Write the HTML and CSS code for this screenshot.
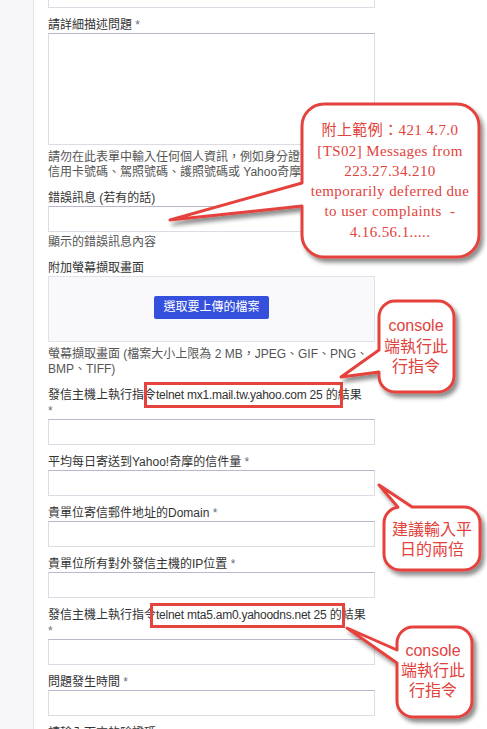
FILE: index.html
```html
<!DOCTYPE html>
<html lang="zh-Hant">
<head>
<meta charset="utf-8">
<title>表單</title>
<link rel="stylesheet" href="styles.css">
</head>
<body>
<div class="page">
  <aside class="sidebar"></aside>
  <main class="form">
    <div class="box stub"></div>

    <div class="label">請詳細描述問題 <span class="req">*</span></div>
    <div class="box textarea"></div>
    <div class="help">請勿在此表單中輸入任何個人資訊，例如身分證字號、<br>信用卡號碼、駕照號碼、護照號碼或 Yahoo奇摩密碼。</div>

    <div class="label">錯誤訊息 (若有的話)</div>
    <div class="box input"></div>
    <div class="help near">顯示的錯誤訊息內容</div>

    <div class="label">附加螢幕擷取畫面</div>
    <div class="upload"><span class="upload-btn">選取要上傳的檔案</span></div>
    <div class="help">螢幕擷取畫面 (檔案大小上限為 2 MB，JPEG、GIF、PNG、<br>BMP、TIFF)</div>

    <div class="label">發信主機上執行指令<span class="cmd">telnet mx1.mail.tw.yahoo.com 25</span> 的結果<br><span class="req">*</span></div>
    <div class="box input"></div>

    <div class="label">平均每日寄送到Yahoo!奇摩的信件量 <span class="req">*</span></div>
    <div class="box input"></div>

    <div class="label">貴單位寄信郵件地址的Domain <span class="req">*</span></div>
    <div class="box input"></div>

    <div class="label">貴單位所有對外發信主機的IP位置 <span class="req">*</span></div>
    <div class="box input"></div>

    <div class="label">發信主機上執行指令<span class="cmd">telnet mta5.am0.yahoodns.net 25</span> 的結果<br><span class="req">*</span></div>
    <div class="box input"></div>

    <div class="label">問題發生時間 <span class="req">*</span></div>
    <div class="box input"></div>

    <div class="label">請輸入下方的驗證碼</div>
  </main>

  <svg class="annot" width="487" height="729" viewBox="0 0 487 729" xmlns="http://www.w3.org/2000/svg">
    <defs>
      <filter id="sh" x="-20%" y="-20%" width="150%" height="150%">
        <feDropShadow dx="3" dy="4" stdDeviation="2" flood-color="#000" flood-opacity="0.45"/>
      </filter>
    </defs>

    <rect class="mark" x="145.5" y="383.5" width="196" height="23"/>
    <rect class="mark" x="151.5" y="604.5" width="192" height="22"/>

    <path class="bubble" filter="url(#sh)" d="M324 104 H457 A22 22 0 0 1 479 126 V235 A22 22 0 0 1 457 257 H324 A22 22 0 0 1 302 235 V206 L170 220 L302 183 V126 A22 22 0 0 1 324 104 Z"/>
    <text class="t-serif" x="390" y="135">附上範例：421 4.7.0</text>
    <text class="t-serif" x="390" y="156">[TS02] Messages from</text>
    <text class="t-serif" x="390" y="176">223.27.34.210</text>
    <text class="t-serif" x="390" y="196">temporarily deferred due</text>
    <text class="t-serif" x="390" y="216" xml:space="preserve">to user complaints  -</text>
    <text class="t-serif" x="390" y="237">4.16.56.1.....</text>

    <path class="bubble" filter="url(#sh)" d="M395 301 H438 A16 16 0 0 1 454 317 V376 A16 16 0 0 1 438 392 H395 A16 16 0 0 1 379 376 V372 L341 377 L379 350 V317 A16 16 0 0 1 395 301 Z"/>
    <text class="t-sans" x="416" y="331">console</text>
    <text class="t-sans" x="416" y="352">端執行此</text>
    <text class="t-sans" x="416" y="372">行指令</text>

    <path class="bubble" filter="url(#sh)" d="M412 507 H464 A16 16 0 0 1 480 523 V554 A16 16 0 0 1 464 570 H400 A16 16 0 0 1 384 554 V523 A16 16 0 0 1 398 507.2 L379 485 L412 507 Z"/>
    <text class="t-sans" x="432" y="535">建議輸入平</text>
    <text class="t-sans" x="432" y="555">日的兩倍</text>

    <path class="bubble" filter="url(#sh)" d="M413 627 H456 A16 16 0 0 1 472 643 V701 A16 16 0 0 1 456 717 H413 A16 16 0 0 1 397 701 V663 L347 628 L397 650 V643 A16 16 0 0 1 413 627 Z"/>
    <text class="t-sans" x="433" y="656">console</text>
    <text class="t-sans" x="433" y="676">端執行此</text>
    <text class="t-sans" x="433" y="696">行指令</text>
  </svg>
</div>
</body>
</html>
```

FILE: styles.css
```css
html, body {
  margin: 0;
  padding: 0;
  background: #fff;
}

body {
  font-family: "Liberation Sans", "Noto Sans CJK TC", sans-serif;
  font-size: 12px;
  color: #333;
}

.page {
  position: relative;
  display: flex;
  width: 487px;
  height: 729px;
  overflow: hidden;
}

.sidebar {
  flex: none;
  width: 33px;
  background: #f7f7f9;
  border-right: 1px solid #e3e3ea;
}

.form {
  flex: none;
  width: 327px;
  padding-left: 14px;
}

.box {
  box-sizing: border-box;
  width: 327px;
  background: #fff;
  border: 1px solid #dcdce4;
  border-top-color: #b9b6cd;
}

.stub {
  height: 8px;
  border-top: none;
}

.textarea {
  height: 112px;
}

.input {
  height: 26px;
}

.label {
  margin-top: 9px;
  line-height: 16px;
  white-space: nowrap;
  color: #333;
}

.help + .label {
  margin-top: 10px;
}

.cmd {
  letter-spacing: -0.25px;
}

.req {
  color: #6d6d7e;
}

.help {
  margin: 5px 0 0;
  line-height: 15px;
  color: #555;
  white-space: nowrap;
}

.help.near {
  margin-top: 3px;
}

.upload {
  box-sizing: border-box;
  width: 327px;
  height: 66px;
  border: 1px solid #e1e1e9;
  background: #f9f9fc;
  display: flex;
  align-items: center;
  justify-content: center;
}

.upload-btn {
  margin-top: -3px;
  height: 23px;
  line-height: 23px;
  padding: 0 9px;
  background: #3450dc;
  color: #fff;
  border-radius: 2px;
  font-size: 12px;
}

.annot {
  position: absolute;
  top: 0;
  left: 0;
  pointer-events: none;
}

.mark {
  fill: none;
  stroke: #e5433d;
  stroke-width: 3;
}

.bubble {
  fill: #fff;
  stroke: #e5433d;
  stroke-width: 3;
  stroke-linejoin: round;
}

.t-serif {
  font-family: "Liberation Serif", "Noto Sans CJK TC", serif;
  font-size: 15px;
  letter-spacing: 0.4px;
  fill: #e2423c;
  text-anchor: middle;
}

.t-sans {
  font-family: "Liberation Sans", "Noto Sans CJK TC", sans-serif;
  font-size: 16px;
  fill: #e2423c;
  text-anchor: middle;
}
```
